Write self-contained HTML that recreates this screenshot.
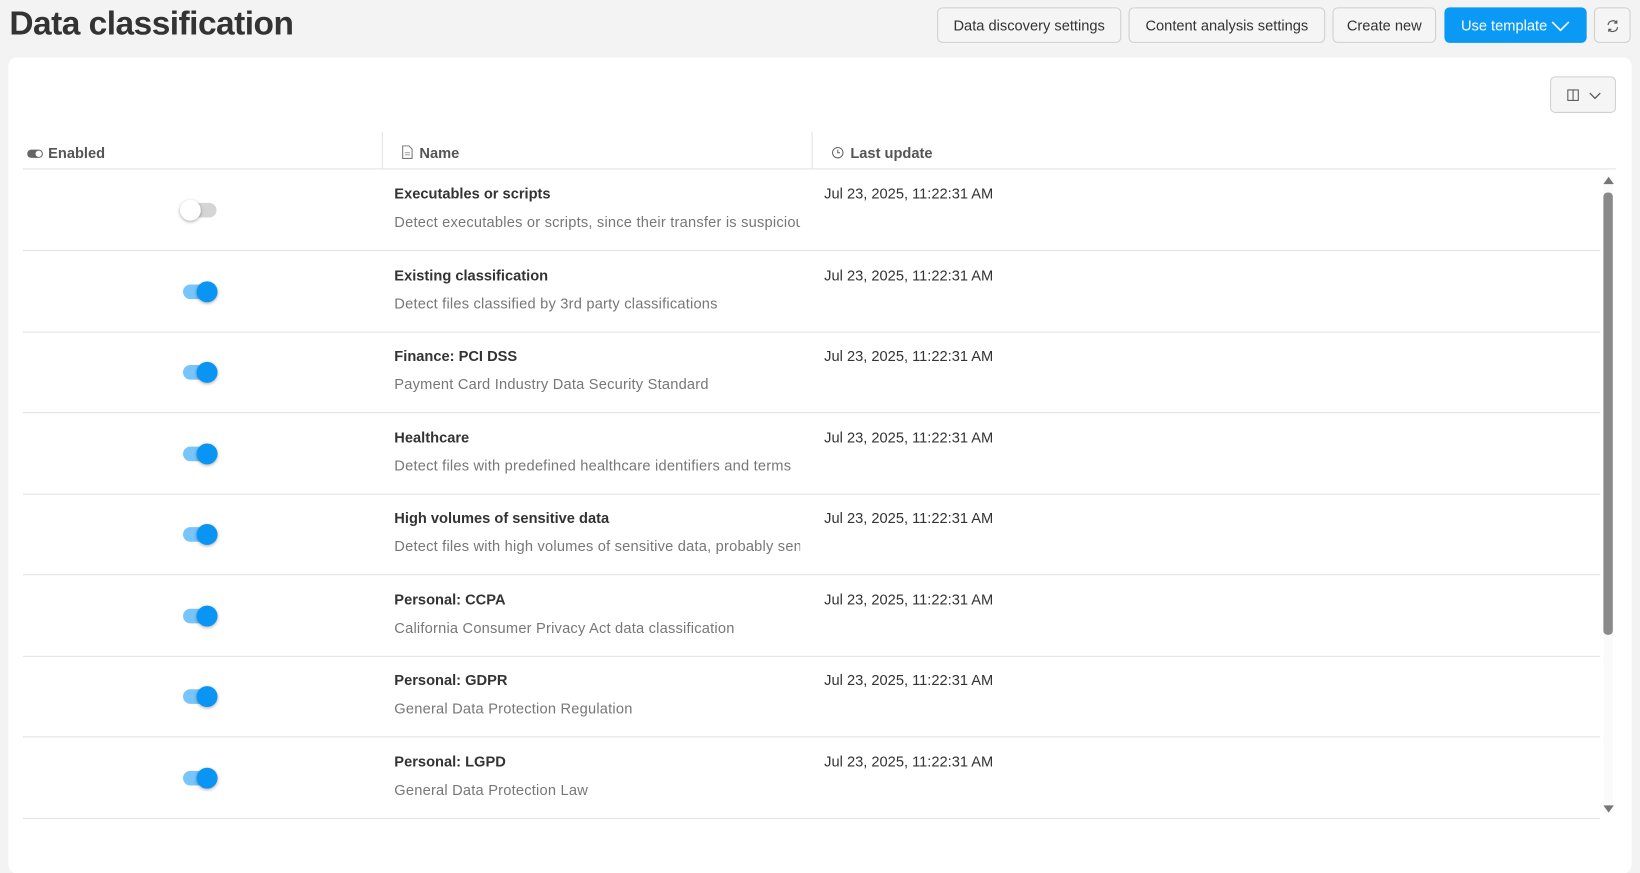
<!DOCTYPE html>
<html><head><meta charset="utf-8"><style>
*{box-sizing:border-box;margin:0;padding:0}
html,body{width:1640px;height:826px;overflow:hidden;background:#f3f3f3}
#w{position:absolute;left:0;top:0;width:1568px;height:790px;transform:scale(1.04592);transform-origin:0 0;font-family:"Liberation Sans",sans-serif;color:#333}
h1{position:absolute;left:9px;top:4px;font-size:32px;font-weight:bold;color:#333;letter-spacing:-0.5px}
.btn{position:absolute;top:7px;height:34px;border:1px solid #cfcfcf;border-radius:5px;background:#f5f5f5;font-size:14px;color:#333;line-height:32px;text-align:center}
.card{position:absolute;left:8px;top:55px;width:1552px;height:780px;background:#fff;border-radius:8px}
.hdr{position:absolute;top:126px;height:36px;font-size:14px;font-weight:bold;color:#555;line-height:40px}
.row{position:absolute;left:22px;width:1508px;height:78px;border-bottom:1px solid #e2e2e2}
.t{position:absolute;left:355px;top:15px;font-size:14px;font-weight:bold;color:#333}
.d{position:absolute;left:355px;top:42px;font-size:14px;color:#777;width:388px;white-space:nowrap;overflow:hidden;letter-spacing:0.2px}
.dt{position:absolute;left:766px;top:15px;font-size:14px;color:#333}
.tg{position:absolute;left:153px;top:32px;width:32px;height:14px;border-radius:7px;background:#77c5fb}
.tg::after{content:"";position:absolute;left:13px;top:-3px;width:20px;height:20px;border-radius:50%;background:#0a95f5;box-shadow:0 1px 3px rgba(0,0,0,.35)}
.tg.off{background:#d5d5d5}
.tg.off::after{left:-3px;background:#fff}
</style></head><body><div id="w">
<h1>Data classification</h1>
<div class="btn" style="left:896px;width:176px">Data discovery settings</div>
<div class="btn" style="left:1079px;width:188px">Content analysis settings</div>
<div class="btn" style="left:1274px;width:99px">Create new</div>
<div class="btn" style="left:1381px;width:136px;background:#0a99f5;border-color:#0a99f5;color:#fff">Use template <svg width="18" height="10" viewBox="0 0 18 10" style="vertical-align:middle"><path d="M1 1l8 8 8-8" fill="none" stroke="#fff" stroke-width="1.5"/></svg></div>
<div class="btn" style="left:1524px;width:35px"><svg width="14" height="14" viewBox="0 0 14 14" style="vertical-align:middle"><path d="M2.5 6a4.5 4.5 0 0 1 8.3-2M11.5 8a4.5 4.5 0 0 1-8.3 2M10.8 1.5v2.5h-2.5M3.2 12.5v-2.5h2.5" fill="none" stroke="#555" stroke-width="1.1"/></svg></div>
<div class="card"></div>
<div class="btn" style="left:1482px;top:73px;width:63px;height:35px;background:#f5f5f5"><svg width="40" height="14" viewBox="0 0 40 14" style="vertical-align:middle"><rect x="5" y="2" width="10" height="10" fill="none" stroke="#555" stroke-width="1"/><line x1="10" y1="2" x2="10" y2="12" stroke="#555"/><path d="M26 5l5 5 5-5" fill="none" stroke="#555" stroke-width="1.2"/></svg></div>
<div style="position:absolute;left:22px;top:161px;width:1523px;height:1px;background:#e2e2e2"></div>
<div style="position:absolute;left:365px;top:126px;width:1px;height:35px;background:#e2e2e2"></div>
<div style="position:absolute;left:776px;top:126px;width:1px;height:35px;background:#e2e2e2"></div>
<div class="hdr" style="left:26px"><span style="display:inline-block;width:15px;height:8px;border-radius:4px;background:#666;position:relative;top:0px;margin-right:5px"><span style="position:absolute;right:1px;top:1px;width:6px;height:6px;border-radius:50%;background:#fff"></span></span>Enabled</div>
<div class="hdr" style="left:384px"><svg width="11" height="13" viewBox="0 0 11 13" style="vertical-align:-1px;margin-right:6px"><path d="M1 .5h6l3 3v9H1z" fill="none" stroke="#777"/><path d="M3 7h5M3 9h5" stroke="#aaa"/></svg>Name</div>
<div class="hdr" style="left:795px"><svg width="12" height="12" viewBox="0 0 12 12" style="vertical-align:-1px;margin-right:6px"><circle cx="6" cy="6" r="5" fill="none" stroke="#666"/><path d="M6 3v3h2" fill="none" stroke="#666"/></svg>Last update</div>
<div style="position:absolute;left:1533px;top:168px;width:9px;height:610px;background:#fafafa"></div>
<div style="position:absolute;left:1533px;top:169px;width:0;height:0;border-left:5px solid transparent;border-right:5px solid transparent;border-bottom:7px solid #777"></div>
<div style="position:absolute;left:1533px;top:770px;width:0;height:0;border-left:5px solid transparent;border-right:5px solid transparent;border-top:7px solid #777"></div>
<div style="position:absolute;left:1533px;top:184px;width:9px;height:423px;border-radius:4px;background:#8a8a8a"></div>

<div class="row" style="top:162px"><div class="tg off"></div><div class="t">Executables or scripts</div><div class="d">Detect executables or scripts, since their transfer is suspicious</div><div class="dt">Jul 23, 2025, 11:22:31 AM</div></div>
<div class="row" style="top:240px"><div class="tg"></div><div class="t">Existing classification</div><div class="d">Detect files classified by 3rd party classifications</div><div class="dt">Jul 23, 2025, 11:22:31 AM</div></div>
<div class="row" style="top:317px"><div class="tg"></div><div class="t">Finance: PCI DSS</div><div class="d">Payment Card Industry Data Security Standard</div><div class="dt">Jul 23, 2025, 11:22:31 AM</div></div>
<div class="row" style="top:395px"><div class="tg"></div><div class="t">Healthcare</div><div class="d">Detect files with predefined healthcare identifiers and terms</div><div class="dt">Jul 23, 2025, 11:22:31 AM</div></div>
<div class="row" style="top:472px"><div class="tg"></div><div class="t">High volumes of sensitive data</div><div class="d">Detect files with high volumes of sensitive data, probably sensitive</div><div class="dt">Jul 23, 2025, 11:22:31 AM</div></div>
<div class="row" style="top:550px"><div class="tg"></div><div class="t">Personal: CCPA</div><div class="d">California Consumer Privacy Act data classification</div><div class="dt">Jul 23, 2025, 11:22:31 AM</div></div>
<div class="row" style="top:627px"><div class="tg"></div><div class="t">Personal: GDPR</div><div class="d">General Data Protection Regulation</div><div class="dt">Jul 23, 2025, 11:22:31 AM</div></div>
<div class="row" style="top:705px"><div class="tg"></div><div class="t">Personal: LGPD</div><div class="d">General Data Protection Law</div><div class="dt">Jul 23, 2025, 11:22:31 AM</div></div>
</div></body></html>
